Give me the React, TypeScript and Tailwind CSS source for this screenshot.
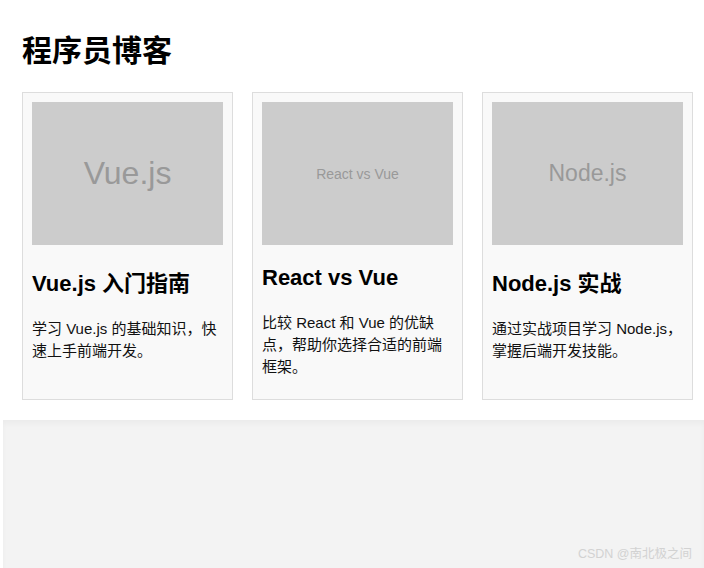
const FONT = "font-['Liberation_Sans','Noto_Sans_CJK_SC',sans-serif]";

const POSTS = [
  {
    cover: "Vue.js",
    coverSize: "text-[32px]",
    title: "Vue.js 入门指南",
    desc: "学习 Vue.js 的基础知识，快速上手前端开发。",
  },
  {
    cover: "React vs Vue",
    coverSize: "text-[14px]",
    title: "React vs Vue",
    desc: "比较 React 和 Vue 的优缺点，帮助你选择合适的前端框架。",
  },
  {
    cover: "Node.js",
    coverSize: "text-[23px]",
    title: "Node.js 实战",
    desc: "通过实战项目学习 Node.js，掌握后端开发技能。",
  },
];

function PostCard({ post }: { post: (typeof POSTS)[number] }) {
  return (
    <div className="w-[211px] shrink-0 border border-[#dddddd] bg-[#f9f9f9] px-[9px] pt-[9px] pb-[22px]">
      {/* placeholder cover */}
      <div className="h-[143px] bg-[#cccccc] flex items-center justify-center">
        <span className={`${post.coverSize} text-[#999999] leading-[normal]`}>{post.cover}</span>
      </div>
      <h3 className="mt-[20px] text-[22px] font-bold text-black leading-[normal]">{post.title}</h3>
      <p className="mt-[21px] text-[15px] text-[#111111] leading-[1.45] -mr-[2px]">{post.desc}</p>
    </div>
  );
}

export default function App() {
  return (
    <div className={`${FONT} min-h-screen h-[568px] bg-white flex flex-col`}>
      <div className="px-[22px] pt-[26px] pb-[20px]">
        <h1 className="text-[30px] font-bold text-black leading-[normal]">程序员博客</h1>

        {/* Post list */}
        <div className="mt-[22px] flex gap-[19px] items-stretch">
          {POSTS.map((post) => (
            <PostCard key={post.title} post={post} />
          ))}
        </div>
      </div>

      {/* Lower gray area */}
      <div className="flex-1 ml-[3px] bg-[#f3f3f3] shadow-[inset_0_4px_5px_rgba(0,0,0,0.03)] flex items-end justify-end pr-[12px] pb-[6px]">
        <span className="text-[12.5px] text-[#d2d2d2] leading-[normal]">CSDN @南北极之间</span>
      </div>
    </div>
  );
}
